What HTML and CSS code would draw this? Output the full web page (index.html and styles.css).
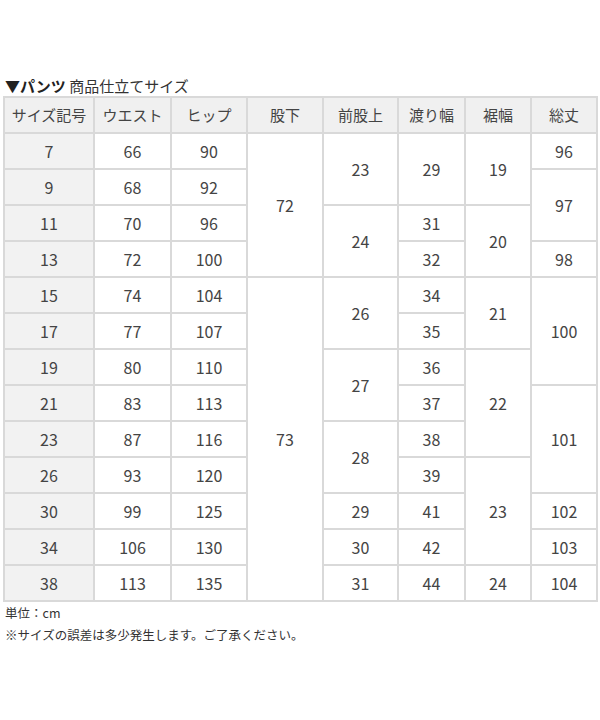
FILE: index.html
```html
<!DOCTYPE html>
<html lang="ja">
<head>
<meta charset="utf-8">
<link rel="stylesheet" href="styles.css">
</head>
<body>
<div class="page">
  <div class="title"><b>▼パンツ</b> 商品仕立てサイズ</div>
  <table class="size">
    <colgroup>
      <col class="c1"><col class="c2"><col class="c3"><col class="c4"><col class="c5"><col class="c6"><col class="c7"><col class="c8">
    </colgroup>
    <thead>
      <tr><th>サイズ記号</th><th>ウエスト</th><th>ヒップ</th><th>股下</th><th>前股上</th><th>渡り幅</th><th>裾幅</th><th>総丈</th></tr>
    </thead>
    <tbody>
      <tr><th>7</th><td>66</td><td>90</td><td rowspan="4">72</td><td rowspan="2">23</td><td rowspan="2">29</td><td rowspan="2">19</td><td>96</td></tr>
      <tr><th>9</th><td>68</td><td>92</td><td rowspan="2">97</td></tr>
      <tr><th>11</th><td>70</td><td>96</td><td rowspan="2">24</td><td>31</td><td rowspan="2">20</td></tr>
      <tr><th>13</th><td>72</td><td>100</td><td>32</td><td>98</td></tr>
      <tr><th>15</th><td>74</td><td>104</td><td rowspan="9">73</td><td rowspan="2">26</td><td>34</td><td rowspan="2">21</td><td rowspan="3">100</td></tr>
      <tr><th>17</th><td>77</td><td>107</td><td>35</td></tr>
      <tr><th>19</th><td>80</td><td>110</td><td rowspan="2">27</td><td>36</td><td rowspan="3">22</td></tr>
      <tr><th>21</th><td>83</td><td>113</td><td>37</td><td rowspan="3">101</td></tr>
      <tr><th>23</th><td>87</td><td>116</td><td rowspan="2">28</td><td>38</td></tr>
      <tr><th>26</th><td>93</td><td>120</td><td>39</td><td rowspan="3">23</td></tr>
      <tr><th>30</th><td>99</td><td>125</td><td>29</td><td>41</td><td>102</td></tr>
      <tr><th>34</th><td>106</td><td>130</td><td>30</td><td>42</td><td>103</td></tr>
      <tr><th>38</th><td>113</td><td>135</td><td>31</td><td>44</td><td>24</td><td>104</td></tr>
    </tbody>
  </table>
  <div class="notes">
    <p>単位：cm</p>
    <p>※サイズの誤差は多少発生します。ご了承ください。</p>
  </div>
</div>
</body>
</html>
```
FILE: styles.css
```css
html, body {
  margin: 0;
  padding: 0;
  background: #ffffff;
}
body {
  font-family: "Noto Sans CJK JP", "Noto Sans", sans-serif;
  color: #444444;
}
.page {
  padding: 77px 3px 0 3px;
}
.title {
  font-size: 15px;
  line-height: 18px;
  height: 19px;
  padding-left: 2px;
  color: #333333;
}
.title b {
  font-weight: 700;
  color: #222222;
}
.size {
  border-collapse: collapse;
  table-layout: fixed;
  width: 594px;
  font-size: 16px;
}
.c1 { width: 90px; }
.c2 { width: 77px; }
.c3 { width: 76px; }
.c4 { width: 76px; }
.c5 { width: 75px; }
.c6 { width: 67px; }
.c7 { width: 66px; }
.c8 { width: 66px; }
.size th, .size td {
  border: 2px solid #d9d9d9;
  height: 34px;
  padding: 0;
  text-align: center;
  vertical-align: middle;
  font-weight: 400;
  line-height: 20px;
}
.size thead th {
  background: #f0f0f0;
  font-size: 15px;
}
.size tbody th {
  background: #f2f2f2;
}
.notes {
  padding-left: 2px;
  font-size: 12.5px;
  line-height: 22px;
  color: #333333;
}
.notes p {
  margin: 0;
}
```
